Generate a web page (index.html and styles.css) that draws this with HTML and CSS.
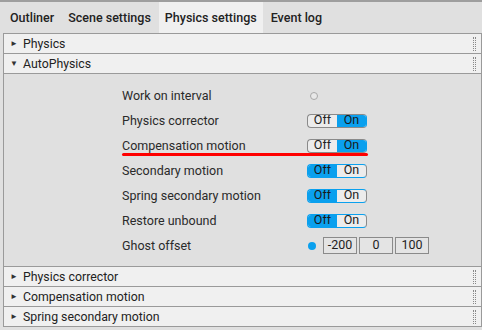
FILE: index.html
```html
<!DOCTYPE html>
<html lang="en">
<head>
    <meta charset="UTF-8">
    <title>Physics settings</title>
    <link rel="stylesheet" href="styles.css">
</head>
<body>
    <div class="tabs">
        <div class="tab">Outliner</div>
        <div class="tab">Scene settings</div>
        <div class="tab active">Physics settings</div>
        <div class="tab">Event log</div>
    </div>
    <div class="panel">
        <div class="section-head"><span class="arrow">&#9658;</span>Physics<span class="grip"></span></div>
        <div class="section-head"><span class="arrow">&#9660;</span>AutoPhysics<span class="grip"></span></div>
        <div class="section-body">
            <div class="row">
                <span class="label">Work on interval</span>
                <span class="radio"></span>
            </div>
            <div class="row">
                <span class="label">Physics corrector</span>
                <span class="toggle"><span class="opt">Off</span><span class="opt on">On</span></span>
            </div>
            <div class="row marked">
                <span class="label">Compensation motion</span>
                <span class="toggle"><span class="opt">Off</span><span class="opt on">On</span></span>
            </div>
            <div class="row">
                <span class="label">Secondary motion</span>
                <span class="toggle"><span class="opt on">Off</span><span class="opt">On</span></span>
            </div>
            <div class="row">
                <span class="label">Spring secondary motion</span>
                <span class="toggle"><span class="opt on">Off</span><span class="opt">On</span></span>
            </div>
            <div class="row">
                <span class="label">Restore unbound</span>
                <span class="toggle"><span class="opt on">Off</span><span class="opt">On</span></span>
            </div>
            <div class="row">
                <span class="label">Ghost offset</span>
                <span class="vector">
                    <span class="dot"></span>
                    <span class="num">-200</span>
                    <span class="num">0</span>
                    <span class="num">100</span>
                </span>
            </div>
        </div>
        <div class="section-head"><span class="arrow">&#9658;</span>Physics corrector<span class="grip"></span></div>
        <div class="section-head"><span class="arrow">&#9658;</span>Compensation motion<span class="grip"></span></div>
        <div class="section-head"><span class="arrow">&#9658;</span>Spring secondary motion<span class="grip"></span></div>
    </div>
</body>
</html>
```

FILE: styles.css
```css
body {
    margin: 0;
    background-color: #e0e0e0;
    font-family: Roboto, "Liberation Sans", sans-serif;
    font-size: 12.3px;
    color: #1e1e1e;
    height: 330px;
    overflow: hidden;
}
.tabs {
    display: flex;
    gap: 2px;
    border-top: 2px solid #9e9e9e;
    height: 31px;
    padding-left: 4px;
}
.tab {
    display: flex;
    align-items: center;
    padding: 0 6px;
    font-size: 12.5px;
    font-weight: 500;
    color: #222;
}
.tab.active {
    background-color: #f0f0f0;
}
.panel {
    margin-left: 3px;
    border-left: 1px solid #9a9a9a;
    border-right: 1px solid #9a9a9a;
    border-top: 1px solid #9a9a9a;
}
.section-head {
    position: relative;
    display: flex;
    align-items: center;
    height: 19px;
    background-color: #f0f0f0;
    border-bottom: 1px solid #9a9a9a;
    color: #222;
}
.arrow {
    font-size: 8px;
    width: 10px;
    margin-left: 6px;
    margin-right: 3px;
    color: #333;
}
.grip {
    position: absolute;
    right: 5px;
    top: 3px;
    width: 1px;
    height: 14px;
    border-left: 1px dotted #888;
    border-right: 1px dotted #888;
    box-sizing: content-box;
}
.section-body {
    background-color: #e0e0e0;
    padding: 9px 0 8px 118px;
    border-bottom: 1px solid #9a9a9a;
}
.row {
    display: flex;
    align-items: center;
    height: 25px;
    position: relative;
}
.label {
    width: 185px;
    font-size: 12.5px;
    color: #2a2a2a;
}
.marked::after {
    content: "";
    position: absolute;
    left: 0;
    top: 20px;
    width: 246px;
    height: 3px;
    border-radius: 2px;
    background-color: #ff0000;
}
.radio {
    width: 6px;
    height: 6px;
    margin-left: 3px;
    border: 1px solid #a8a8a8;
    border-radius: 50%;
    background-color: #e8e8e8;
}
.toggle {
    display: flex;
    height: 14px;
    width: 60px;
    border-radius: 4px;
    overflow: hidden;
    border: 1px solid #8a8a8a;
    box-sizing: border-box;
    background-color: #ececec;
    font-size: 12.5px;
}
.opt {
    flex: 1;
    display: flex;
    align-items: center;
    justify-content: center;
    line-height: 1;
    color: #222;
}
.opt.on {
    background-color: #0aa0ee;
    color: #1a1a1a;
}
.toggle:has(.opt.on:first-child) {
    border-color: #0aa0ee;
    border-right-color: #8a8a8a;
}
.toggle:has(.opt.on:last-child) {
    border-right-color: #0aa0ee;
}
.vector {
    display: flex;
    align-items: center;
    gap: 2px;
}
.dot {
    width: 8px;
    height: 8px;
    border-radius: 50%;
    background-color: #0aa0ee;
    margin-left: 1px;
    margin-right: 5px;
}
.num {
    display: flex;
    align-items: center;
    justify-content: center;
    width: 32px;
    height: 15px;
    border: 1px solid #8a8a8a;
    background-color: #e4e4e4;
    line-height: 1;
    font-size: 12.5px;
}
```
